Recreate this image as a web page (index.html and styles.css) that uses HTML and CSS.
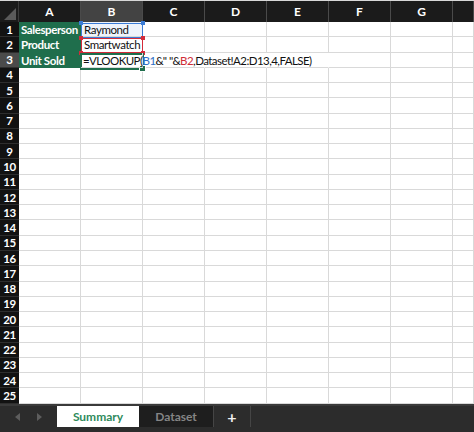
FILE: index.html
```html
<!DOCTYPE html>
<html>
<head>
<meta charset="utf-8">
<link rel="stylesheet" href="styles.css">
</head>
<body>
<div class="sheet">
  <div class="hrow">
    <div class="corner"><span class="tri"></span></div>
    <div class="ch">A</div><div class="ch sel">B</div><div class="ch">C</div><div class="ch">D</div><div class="ch">E</div><div class="ch">F</div><div class="ch">G</div><div class="ch last"></div>
  </div>
  <div class="row"><div class="rh">1</div><div class="c g">Salesperson</div><div class="c b1">Raymond</div><div class="c"></div><div class="c"></div><div class="c"></div><div class="c"></div><div class="c"></div><div class="c last"></div></div>
  <div class="row"><div class="rh">2</div><div class="c g">Product</div><div class="c">Smartwatch</div><div class="c"></div><div class="c"></div><div class="c"></div><div class="c"></div><div class="c"></div><div class="c last"></div></div>
  <div class="row"><div class="rh sel">3</div><div class="c g">Unit Sold</div><div class="c over">=VLOOKUP(<span class="rb">B1</span>&amp;" "&amp;<span class="rr">B2</span>,Dataset!A2:D13,4,FALSE)</div><div class="c nb"></div><div class="c nb"></div><div class="c nb"></div><div class="c"></div><div class="c"></div><div class="c last"></div></div>
  <div class="row"><div class="rh">4</div><div class="c"></div><div class="c"></div><div class="c"></div><div class="c"></div><div class="c"></div><div class="c"></div><div class="c"></div><div class="c last"></div></div>
  <div class="row"><div class="rh">5</div><div class="c"></div><div class="c"></div><div class="c"></div><div class="c"></div><div class="c"></div><div class="c"></div><div class="c"></div><div class="c last"></div></div>
  <div class="row"><div class="rh">6</div><div class="c"></div><div class="c"></div><div class="c"></div><div class="c"></div><div class="c"></div><div class="c"></div><div class="c"></div><div class="c last"></div></div>
  <div class="row"><div class="rh">7</div><div class="c"></div><div class="c"></div><div class="c"></div><div class="c"></div><div class="c"></div><div class="c"></div><div class="c"></div><div class="c last"></div></div>
  <div class="row"><div class="rh">8</div><div class="c"></div><div class="c"></div><div class="c"></div><div class="c"></div><div class="c"></div><div class="c"></div><div class="c"></div><div class="c last"></div></div>
  <div class="row"><div class="rh">9</div><div class="c"></div><div class="c"></div><div class="c"></div><div class="c"></div><div class="c"></div><div class="c"></div><div class="c"></div><div class="c last"></div></div>
  <div class="row"><div class="rh">10</div><div class="c"></div><div class="c"></div><div class="c"></div><div class="c"></div><div class="c"></div><div class="c"></div><div class="c"></div><div class="c last"></div></div>
  <div class="row"><div class="rh">11</div><div class="c"></div><div class="c"></div><div class="c"></div><div class="c"></div><div class="c"></div><div class="c"></div><div class="c"></div><div class="c last"></div></div>
  <div class="row"><div class="rh">12</div><div class="c"></div><div class="c"></div><div class="c"></div><div class="c"></div><div class="c"></div><div class="c"></div><div class="c"></div><div class="c last"></div></div>
  <div class="row"><div class="rh">13</div><div class="c"></div><div class="c"></div><div class="c"></div><div class="c"></div><div class="c"></div><div class="c"></div><div class="c"></div><div class="c last"></div></div>
  <div class="row"><div class="rh">14</div><div class="c"></div><div class="c"></div><div class="c"></div><div class="c"></div><div class="c"></div><div class="c"></div><div class="c"></div><div class="c last"></div></div>
  <div class="row"><div class="rh">15</div><div class="c"></div><div class="c"></div><div class="c"></div><div class="c"></div><div class="c"></div><div class="c"></div><div class="c"></div><div class="c last"></div></div>
  <div class="row"><div class="rh">16</div><div class="c"></div><div class="c"></div><div class="c"></div><div class="c"></div><div class="c"></div><div class="c"></div><div class="c"></div><div class="c last"></div></div>
  <div class="row"><div class="rh">17</div><div class="c"></div><div class="c"></div><div class="c"></div><div class="c"></div><div class="c"></div><div class="c"></div><div class="c"></div><div class="c last"></div></div>
  <div class="row"><div class="rh">18</div><div class="c"></div><div class="c"></div><div class="c"></div><div class="c"></div><div class="c"></div><div class="c"></div><div class="c"></div><div class="c last"></div></div>
  <div class="row"><div class="rh">19</div><div class="c"></div><div class="c"></div><div class="c"></div><div class="c"></div><div class="c"></div><div class="c"></div><div class="c"></div><div class="c last"></div></div>
  <div class="row"><div class="rh">20</div><div class="c"></div><div class="c"></div><div class="c"></div><div class="c"></div><div class="c"></div><div class="c"></div><div class="c"></div><div class="c last"></div></div>
  <div class="row"><div class="rh">21</div><div class="c"></div><div class="c"></div><div class="c"></div><div class="c"></div><div class="c"></div><div class="c"></div><div class="c"></div><div class="c last"></div></div>
  <div class="row"><div class="rh">22</div><div class="c"></div><div class="c"></div><div class="c"></div><div class="c"></div><div class="c"></div><div class="c"></div><div class="c"></div><div class="c last"></div></div>
  <div class="row"><div class="rh">23</div><div class="c"></div><div class="c"></div><div class="c"></div><div class="c"></div><div class="c"></div><div class="c"></div><div class="c"></div><div class="c last"></div></div>
  <div class="row"><div class="rh">24</div><div class="c"></div><div class="c"></div><div class="c"></div><div class="c"></div><div class="c"></div><div class="c"></div><div class="c"></div><div class="c last"></div></div>
  <div class="row"><div class="rh">25</div><div class="c"></div><div class="c"></div><div class="c"></div><div class="c"></div><div class="c"></div><div class="c"></div><div class="c"></div><div class="c last"></div></div>

  <div class="ref blue"><i class="k tl"></i><i class="k tr"></i><i class="k bl"></i><i class="k br"></i></div>
  <div class="ref red"><i class="k tl"></i><i class="k tr"></i><i class="k bl"></i><i class="k br"></i></div>
  <div class="active"><i class="handle"></i></div>
</div>
<div class="tabs">
  <div class="nav">
    <svg width="10" height="10" viewBox="0 0 10 10"><path d="M7 1 L2 5 L7 9 Z" fill="#5d5d5d"/></svg>
    <svg width="10" height="10" viewBox="0 0 10 10"><path d="M3 1 L8 5 L3 9 Z" fill="#5d5d5d"/></svg>
  </div>
  <div class="tab on">Summary</div>
  <div class="tab off">Dataset</div>
  <div class="add">+</div>
</div>
</body>
</html>
```
FILE: styles.css
```css
html, body {
  margin: 0;
  padding: 0;
  background: #fff;
}
body {
  width: 474px;
  height: 432px;
  overflow: hidden;
  font-family: Lato, "Liberation Sans", sans-serif;
}
.sheet {
  position: relative;
  border-top: 1px solid #d8d8d8;
  height: 403px;
  overflow: hidden;
}
.hrow {
  display: flex;
  height: 21px;
  background: #1b1b1b;
}
.corner {
  width: 19px;
  flex: none;
  position: relative;
  border-right: 1px solid #3a3a3a;
  box-sizing: border-box;
}
.tri {
  position: absolute;
  right: 2px;
  bottom: 2px;
  width: 0;
  height: 0;
  border-left: 12px solid transparent;
  border-bottom: 12px solid #5a5a5a;
}
.ch {
  width: 62px;
  flex: none;
  box-sizing: border-box;
  border-right: 1px solid #4a4a4a;
  color: #fff;
  font-weight: bold;
  font-size: 12px;
  display: flex;
  align-items: center;
  justify-content: center;
}
.ch.sel { background: #434343; }
.ch.last, .c.last { flex: 1; width: auto; }
.row {
  display: flex;
  height: 15.28px;
}
.rh {
  width: 19px;
  flex: none;
  background: #121212;
  color: #fff;
  font-weight: bold;
  font-size: 11.5px;
  letter-spacing: -0.3px;
  display: flex;
  align-items: center;
  justify-content: center;
  box-sizing: border-box;
  border-bottom: 1px solid #2e2e2e;
}
.rh.sel { background: #4b4b4b; }
.c {
  width: 62px;
  flex: none;
  box-sizing: border-box;
  border-right: 1px solid #d9d9d9;
  border-bottom: 1px solid #d9d9d9;
  font-size: 11.5px;
  letter-spacing: -0.4px;
  line-height: 16px;
  padding-left: 3px;
  white-space: nowrap;
  overflow: hidden;
  color: #111;
}
.c.over { letter-spacing: -0.55px; padding-left: 2px; }
.c.g {
  background: #1f6e4c;
  color: #fff;
  font-weight: bold;
  padding-left: 2px;
  border-right-color: #1f6e4c;
  border-bottom-color: #1f6e4c;
}
.c.b1 { background: #eef3fb; }
.c.over { position: relative; z-index: 4; overflow: visible; }
.c.nb { border-right-color: transparent; }
.rb { color: #2f6fc5; }
.rr { color: #cf2b36; }
.ref {
  position: absolute;
  left: 81px;
  width: 62px;
  height: 15px;
  box-sizing: border-box;
  border: 1px solid;
  z-index: 2;
}
.ref.blue { top: 22px; border-color: #3a7bd5; }
.ref.red { top: 37px; border-color: #d22b3a; }
.k {
  position: absolute;
  width: 4px;
  height: 4px;
}
.blue .k { background: #3a7bd5; }
.red .k { background: #d22b3a; }
.k.tl { left: -3px; top: -3px; }
.k.tr { right: -3px; top: -3px; }
.k.bl { left: -3px; bottom: -3px; }
.k.br { right: -3px; bottom: -3px; }
.active {
  position: absolute;
  left: 80px;
  top: 52px;
  width: 64px;
  height: 17px;
  box-sizing: border-box;
  border: 2px solid #1f6e4c;
  z-index: 3;
}
.handle {
  position: absolute;
  right: -4px;
  bottom: -4px;
  width: 5px;
  height: 5px;
  background: #1f6e4c;
  border: 1px solid #fff;
}
.tabs {
  display: flex;
  align-items: flex-start;
  height: 28px;
  background: #2c2c2c;
  border-top: 2px solid #3a3a3a;
  box-sizing: border-box;
}
.nav {
  width: 57px;
  height: 21px;
  display: flex;
  align-items: center;
  justify-content: center;
  gap: 11px;
}
.tab {
  height: 21px;
  display: flex;
  align-items: center;
  justify-content: center;
  font-weight: bold;
  font-size: 12px;
}
.tab.on {
  width: 82px;
  background: #fff;
  color: #2e8a5c;
}
.tab.off {
  width: 74px;
  background: #1e1e1e;
  color: #858585;
  border-right: 1px solid #454545;
}
.add {
  width: 36px;
  height: 21px;
  display: flex;
  align-items: center;
  justify-content: center;
  color: #f0f0f0;
  font-weight: bold;
  font-size: 16px;
  border-right: 1px solid #454545;
}
```
